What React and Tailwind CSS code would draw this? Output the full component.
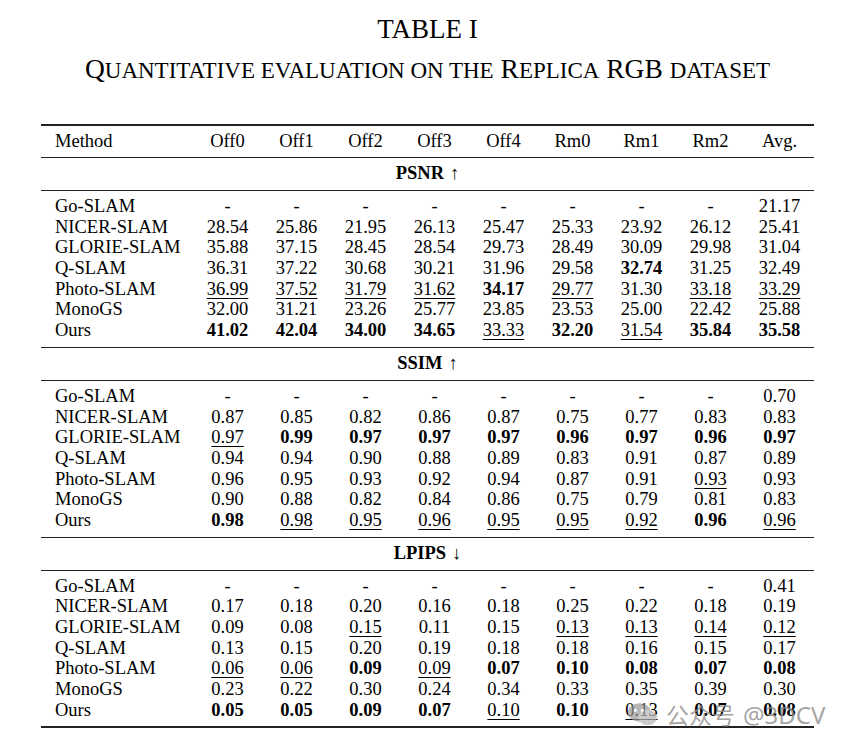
import React from 'react';

const cols = ['Off0', 'Off1', 'Off2', 'Off3', 'Off4', 'Rm0', 'Rm1', 'Rm2', 'Avg.'];
const methods = ['Go-SLAM', 'NICER-SLAM', 'GLORIE-SLAM', 'Q-SLAM', 'Photo-SLAM', 'MonoGS', 'Ours'];

// "*" = best (bold), "_" = second best (underlined)
const sections = [
  {
    title: 'PSNR',
    arrow: '↑',
    rows: [
      ['-', '-', '-', '-', '-', '-', '-', '-', '21.17'],
      ['28.54', '25.86', '21.95', '26.13', '25.47', '25.33', '23.92', '26.12', '25.41'],
      ['35.88', '37.15', '28.45', '28.54', '29.73', '28.49', '30.09', '29.98', '31.04'],
      ['36.31', '37.22', '30.68', '30.21', '31.96', '29.58', '*32.74', '31.25', '32.49'],
      ['_36.99', '_37.52', '_31.79', '_31.62', '*34.17', '_29.77', '31.30', '_33.18', '_33.29'],
      ['32.00', '31.21', '23.26', '25.77', '23.85', '23.53', '25.00', '22.42', '25.88'],
      ['*41.02', '*42.04', '*34.00', '*34.65', '_33.33', '*32.20', '_31.54', '*35.84', '*35.58'],
    ],
  },
  {
    title: 'SSIM',
    arrow: '↑',
    rows: [
      ['-', '-', '-', '-', '-', '-', '-', '-', '0.70'],
      ['0.87', '0.85', '0.82', '0.86', '0.87', '0.75', '0.77', '0.83', '0.83'],
      ['_0.97', '*0.99', '*0.97', '*0.97', '*0.97', '*0.96', '*0.97', '*0.96', '*0.97'],
      ['0.94', '0.94', '0.90', '0.88', '0.89', '0.83', '0.91', '0.87', '0.89'],
      ['0.96', '0.95', '0.93', '0.92', '0.94', '0.87', '0.91', '_0.93', '0.93'],
      ['0.90', '0.88', '0.82', '0.84', '0.86', '0.75', '0.79', '0.81', '0.83'],
      ['*0.98', '_0.98', '_0.95', '_0.96', '_0.95', '_0.95', '_0.92', '*0.96', '_0.96'],
    ],
  },
  {
    title: 'LPIPS',
    arrow: '↓',
    rows: [
      ['-', '-', '-', '-', '-', '-', '-', '-', '0.41'],
      ['0.17', '0.18', '0.20', '0.16', '0.18', '0.25', '0.22', '0.18', '0.19'],
      ['0.09', '0.08', '_0.15', '0.11', '0.15', '_0.13', '_0.13', '_0.14', '_0.12'],
      ['0.13', '0.15', '0.20', '0.19', '0.18', '0.18', '0.16', '0.15', '0.17'],
      ['_0.06', '_0.06', '*0.09', '_0.09', '*0.07', '*0.10', '*0.08', '*0.07', '*0.08'],
      ['0.23', '0.22', '0.30', '0.24', '0.34', '0.33', '0.35', '0.39', '0.30'],
      ['*0.05', '*0.05', '*0.09', '*0.07', '_0.10', '*0.10', '_0.13', '*0.07', '*0.08'],
    ],
  },
];

const grid = 'grid grid-cols-[152px_repeat(9,69px)]';

const Cell = ({ v }) => {
  if (v.startsWith('*')) return <span className="font-bold">{v.slice(1)}</span>;
  if (v.startsWith('_'))
    return <span className="underline decoration-1 underline-offset-[3px]">{v.slice(1)}</span>;
  return <span>{v}</span>;
};

// small caps done by hand: capitals big, the rest uppercase and smaller
const Sc = ({ children }) => <span className="text-[23px] uppercase">{children}</span>;

export default function App() {
  return (
    <div className="w-[845px] h-[750px] bg-white text-black font-['Liberation_Serif','Times_New_Roman',serif]">
      <div className="relative ml-[41px] w-[773px]">
        {/* Caption */}
        <div className="pt-[15px] text-center text-[27px] leading-[28px]">TABLE I</div>
        <div className="mt-[12px] h-[28px] whitespace-nowrap text-center text-[27.5px] leading-[28px]">
          Q<Sc>uantitative evaluation on the</Sc> R<Sc>eplica</Sc> RGB <Sc>dataset</Sc>
        </div>

        {/* Table */}
        <div className="mt-[41px] h-[2px] bg-[#222]" />
        <div className={`${grid} h-[31px] items-center text-[18.5px]`}>
          <div className="pl-[14px]">Method</div>
          {cols.map((c) => (
            <div key={c} className="text-center">{c}</div>
          ))}
        </div>
        <div className="h-px bg-[#222]" />

        {sections.map((s) => (
          <div key={s.title}>
            <div className="flex h-[32px] items-center justify-center text-[18.5px]">
              <span className="font-bold">{s.title}</span>
              <span className="ml-[6px]">{s.arrow}</span>
            </div>
            <div className="h-px bg-[#222]" />
            <div className="pt-[5px] pb-[6px] text-[18.5px]">
              {s.rows.map((r, i) => (
                <div key={methods[i]} className={`${grid} h-[20.7px] items-center leading-[20.7px]`}>
                  <div className="pl-[14px]">{methods[i]}</div>
                  {r.map((v, j) => (
                    <div key={j} className="text-center">
                      <Cell v={v} />
                    </div>
                  ))}
                </div>
              ))}
            </div>
            <div className={s.title === 'LPIPS' ? 'h-[2px] bg-[#222]' : 'h-px bg-[#222]'} />
          </div>
        ))}

        {/* Watermark */}
        <div className="absolute left-[586px] top-[702px] flex items-center gap-[8px] whitespace-nowrap text-[#8c8c8c]/80">
          <svg width="31" height="25" viewBox="0 0 30 24" className="opacity-70">
            <ellipse cx="12" cy="10" rx="11" ry="9" fill="#9a9a9a" />
            <ellipse cx="20" cy="15" rx="9" ry="7.5" fill="#b5b5b5" />
            <circle cx="8" cy="8" r="1.6" fill="#fff" />
            <circle cx="15" cy="8" r="1.6" fill="#fff" />
          </svg>
          <span className="text-[23px] leading-none font-['Noto_Sans_CJK_SC',sans-serif]">公众号</span>
          <span className="text-[24px] leading-none font-['Noto_Sans',sans-serif]">@3DCV</span>
        </div>
      </div>
    </div>
  );
}
